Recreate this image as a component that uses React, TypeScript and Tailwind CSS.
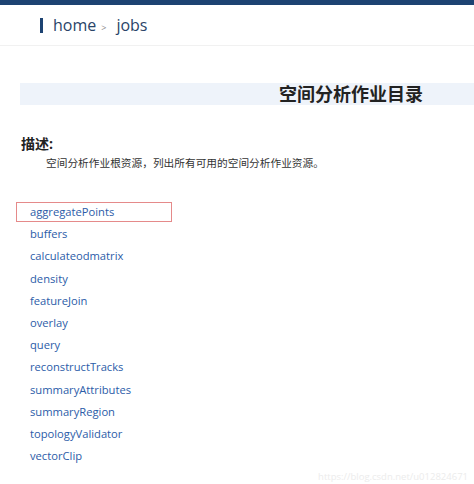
const jobs = [
  "aggregatePoints",
  "buffers",
  "calculateodmatrix",
  "density",
  "featureJoin",
  "overlay",
  "query",
  "reconstructTracks",
  "summaryAttributes",
  "summaryRegion",
  "topologyValidator",
  "vectorClip",
];

const font = "font-['Open_Sans','Noto_Sans_CJK_SC',sans-serif]";

export default function App() {
  return (
    <div className={`w-[474px] h-[484px] overflow-hidden bg-white ${font}`}>
      <div className="h-[5px] bg-[#1d4372]" />
      <div className="h-[41px] flex items-center pl-[40px] border-b border-[#f1f1f1]">
        <div className="w-[3px] h-[15px] bg-[#1d4372]" />
        <span className="ml-[10px] text-[16px] text-[#2a4468] leading-none">home</span>
        <span className="ml-[5px] mt-[4px] text-[9px] text-[#8a8a8a] leading-none">&gt;</span>
        <span className="ml-[10px] text-[16px] text-[#2a4468] leading-none">jobs</span>
      </div>

      <div className="mt-[37px] ml-[20px] h-[22px] bg-[#eef3fa] flex items-center pl-[259px]">
        <h1 className="text-[18px] font-bold text-[#222] leading-none">空间分析作业目录</h1>
      </div>

      <div className="mt-[32px] ml-[21px] text-[14px] font-bold text-[#222] leading-none">描述:</div>
      <p className="mt-[7px] ml-[46px] text-[10.7px] text-[#333] leading-none">
        空间分析作业根资源，列出所有可用的空间分析作业资源。
      </p>

      <ul className="mt-[33px] flex flex-col">
        {jobs.map((job, i) => (
          <li
            key={job}
            className={
              i === 0
                ? "ml-[16px] w-[156px] h-[20px] border border-[#e58a8a] pl-[13px] flex items-center mb-[1px]"
                : "ml-[30px] h-[22.2px] flex items-center"
            }
          >
            <a href="#" className="text-[11.2px] text-[#2b5ca8] leading-none">
              {job}
            </a>
          </li>
        ))}
      </ul>

      <div className="flex justify-end pr-[6px] mt-[5px]">
        <span className="text-[9.5px] text-[#ececec] leading-none">https://blog.csdn.net/u012824671</span>
      </div>
    </div>
  );
}
